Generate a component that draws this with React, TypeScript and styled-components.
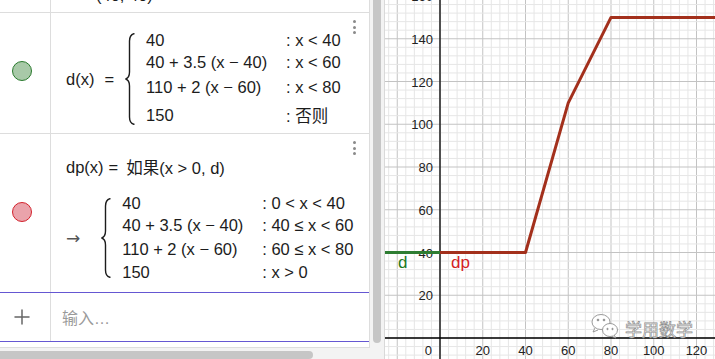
import React from 'react';
import styled, { createGlobalStyle } from 'styled-components';
import { Plus } from 'lucide-react';

const MATH_FONT = `"Liberation Sans", "Noto Sans CJK SC", sans-serif`;

const GlobalStyle = createGlobalStyle`
  html, body { margin: 0; padding: 0; background: #fff; overflow: hidden; }
  body { font-family: ${MATH_FONT}; }
`;

const Screen = styled.div`
  display: flex;
  width: 715px;
  height: 359px;
  overflow: hidden;
`;

// ---- algebra view ----

const AlgebraView = styled.div`
  display: grid;
  grid-template-columns: 370px 14px;
  grid-template-rows: 348px 11px;
  width: 385px;
  box-sizing: border-box;
  flex-shrink: 0;
  background: #f3f3f3;
  border-right: 1px solid #d9d9d9;
`;

const List = styled.div`
  display: flex;
  flex-direction: column;
  background: #fff;
  border-right: 1px solid #dddddd;
  border-bottom: 1px solid #dddddd;
  box-sizing: border-box;
  overflow: hidden;
`;

const VTrack = styled.div`
  padding: 0 3px;
`;

const VThumb = styled.div`
  width: 8px;
  height: 343px;
  background: #c6c6c6;
  border-radius: 0 0 4px 4px;
`;

const HTrack = styled.div`
  grid-column: 1 / span 2;
  padding-top: 3px;
`;

const HThumb = styled.div`
  width: 313px;
  height: 8px;
  background: #c6c6c6;
  border-radius: 0 4px 4px 0;
`;

const Row = styled.div<{ $height: number; $accent?: boolean; $noBorder?: boolean }>`
  display: grid;
  grid-template-columns: 51px 1fr;
  height: ${p => p.$height}px;
  flex-shrink: 0;
  border-top: ${p => (p.$accent ? '1px solid #6557d2' : 'none')};
  border-bottom: ${p => (p.$accent ? '1px solid #6557d2' : p.$noBorder ? 'none' : '1px solid #dddddd')};
`;

const Marker = styled.div<{ $pb?: number }>`
  display: flex;
  align-items: center;
  padding-left: 12px;
  padding-bottom: ${p => p.$pb ?? 0}px;
  border-right: 1px solid #dddddd;
  color: #666;
`;

const PlusMarker = styled(Marker)`
  padding-left: 10px;
`;

const Dot = styled.div<{ $fill: string; $stroke: string }>`
  width: 20px;
  height: 20px;
  box-sizing: border-box;
  border-radius: 50%;
  background: ${p => p.$fill};
  border: 1.5px solid ${p => p.$stroke};
`;

const Content = styled.div<{ $pt: number; $pl: number }>`
  position: relative;
  padding: ${p => p.$pt}px 0 0 ${p => p.$pl}px;
  font-family: ${MATH_FONT};
  font-size: 16.5px;
  color: #1c1c1c;
  white-space: pre;
`;

const StubText = styled.div`
  margin-top: -14px;
  padding-left: 45px;
`;

const MenuDots = styled.div`
  position: absolute;
  top: 7px;
  right: 13px;
  display: flex;
  flex-direction: column;
  gap: 2.5px;
`;

const MenuDot = styled.span`
  width: 3px;
  height: 3px;
  border-radius: 50%;
  background: #8a8a8a;
`;

const Formula = styled.div<{ $mt?: number }>`
  display: flex;
  align-items: center;
  margin-top: ${p => p.$mt ?? 0}px;
`;

const Eq = styled.span<{ $l: number; $r: number }>`
  margin: 0 ${p => p.$r}px 0 ${p => p.$l}px;
`;

const Arrow = styled.span`
  font-family: "DejaVu Sans", sans-serif;
  font-size: 17px;
  color: #555;
  margin-right: 21px;
`;

const CaseGrid = styled.div<{ $rows: string }>`
  display: grid;
  grid-template-columns: 140px auto;
  grid-template-rows: ${p => p.$rows};
  align-items: center;
  margin-left: 11px;
`;

const Placeholder = styled.div`
  display: flex;
  align-items: center;
  padding-left: 11px;
  font-size: 16px;
  color: #9a9a9a;
`;

const Brace = ({ height }: { height: number }) => {
  const m = height / 2;
  return (
    <svg width="10" height={height} viewBox={`0 0 10 ${height}`} style={{ flexShrink: 0 }}>
      <path
        d={`M9.5,0.5 Q4.5,1.5 4.5,8 L4.5,${m - 7} Q4.5,${m - 1} 0.5,${m} Q4.5,${m + 1} 4.5,${m + 7} L4.5,${height - 8} Q4.5,${height - 1.5} 9.5,${height - 0.5}`}
        fill="none"
        stroke="#1c1c1c"
        strokeWidth="1.4"
      />
    </svg>
  );
};

const Menu = () => (
  <MenuDots>
    <MenuDot />
    <MenuDot />
    <MenuDot />
  </MenuDots>
);

const dCases: [string, string][] = [
  ['40', ': x < 40'],
  ['40 + 3.5 (x − 40)', ': x < 60'],
  ['110 + 2 (x − 60)', ': x < 80'],
  ['150', ': 否则'],
];

const dpCases: [string, string][] = [
  ['40', ': 0 < x < 40'],
  ['40 + 3.5 (x − 40)', ': 40 ≤ x < 60'],
  ['110 + 2 (x − 60)', ': 60 ≤ x < 80'],
  ['150', ': x > 0'],
];

const Cases = ({ items, rows }: { items: [string, string][]; rows: string }) => (
  <CaseGrid $rows={rows}>
    {items.map(([v, c]) => (
      <React.Fragment key={c}>
        <span>{v}</span>
        <span>{c}</span>
      </React.Fragment>
    ))}
  </CaseGrid>
);

// ---- graphics view ----

const GraphView = styled.div`
  flex: 1;
  height: 359px;
  background: #fff;
  overflow: hidden;
`;

const S = 2.1375;
const X0 = 55;
const Y0 = 338;
const GW = 330;
const GH = 359;
const px = (x: number) => X0 + x * S;
const py = (y: number) => Y0 - y * S;

const Graph = () => {
  const minor = S * 4;
  const vLines: { x: number; major: boolean }[] = [];
  for (let k = -8; k <= 40; k++) {
    const x = X0 + k * minor;
    if (x >= 0 && x <= GW) vLines.push({ x, major: k % 5 === 0 });
  }
  const hLines: { y: number; major: boolean }[] = [];
  for (let k = -4; k <= 45; k++) {
    const y = Y0 - k * minor;
    if (y >= 0 && y <= GH) hLines.push({ y, major: k % 5 === 0 });
  }
  const dp = [
    [0, 40],
    [40, 40],
    [60, 110],
    [80, 150],
    [200, 150],
  ]
    .map(([x, y]) => `${px(x)},${py(y)}`)
    .join(' ');

  return (
    <svg width={GW} height={GH} style={{ display: 'block' }} fontFamily={MATH_FONT}>
      {[false, true].map(isMajor =>
        vLines
          .filter(l => l.major === isMajor)
          .map(l => (
            <line key={`v${isMajor}${l.x}`} x1={l.x} x2={l.x} y1={0} y2={GH} stroke={isMajor ? '#c3c3c3' : '#e6e6e6'} strokeWidth="1" />
          ))
      )}
      {[false, true].map(isMajor =>
        hLines
          .filter(l => l.major === isMajor)
          .map(l => (
            <line key={`h${isMajor}${l.y}`} x1={0} x2={GW} y1={l.y} y2={l.y} stroke={isMajor ? '#c3c3c3' : '#e6e6e6'} strokeWidth="1" />
          ))
      )}
      <line x1={X0} x2={X0} y1={0} y2={GH} stroke="#000" strokeWidth="1.3" />
      <line x1={0} x2={GW} y1={Y0} y2={Y0} stroke="#000" strokeWidth="1.3" />

      <g fontSize="13" fill="#222">
        {[20, 40, 60, 80, 100, 120, 140, 160].map(v => (
          <text key={`y${v}`} x={X0 - 7} y={py(v) + 5} textAnchor="end">
            {v}
          </text>
        ))}
        {[20, 40, 60, 80, 100, 120].map(v => (
          <text key={`x${v}`} x={px(v)} y={355} textAnchor="middle">
            {v}
          </text>
        ))}
        <text x={X0 - 8} y={355} textAnchor="end">
          0
        </text>
      </g>

      <line x1={0} x2={X0} y1={py(40)} y2={py(40)} stroke="#2e7d32" strokeWidth="3" />
      <polyline points={dp} fill="none" stroke="#a3301c" strokeWidth="3" strokeLinejoin="round" />
      <text x={13} y={268} fontSize="17" fill="#1f7a1f">
        d
      </text>
      <text x={66} y={268} fontSize="17" fill="#d41f1f">
        dp
      </text>

      <g fill="#fff" stroke="#8e8e8e" strokeWidth="0.9">
        <ellipse cx={216} cy={322} rx={9} ry={7.5} />
        <path d="M210,328 l-2,4 l5,-2" />
        <ellipse cx={225} cy={330} rx={7.5} ry={6.5} />
        <path d="M229,335 l2,3 l-4,-1.5" />
        <circle cx={213} cy={320} r={0.9} fill="#8e8e8e" />
        <circle cx={219} cy={320} r={0.9} fill="#8e8e8e" />
        <circle cx={222.5} cy={329} r={0.7} fill="#8e8e8e" />
        <circle cx={227.5} cy={329} r={0.7} fill="#8e8e8e" />
        <text x={240} y={336} fontSize="17" fontFamily={`"Noto Sans CJK SC", sans-serif`} strokeWidth="0.7">
          学用数学
        </text>
      </g>
    </svg>
  );
};

export default function App() {
  return (
    <>
      <GlobalStyle />
      <Screen>
        <AlgebraView>
          <List>
            <Row $height={12}>
              <Marker />
              <Content $pt={0} $pl={0}>
                <StubText>(40, 40)</StubText>
              </Content>
            </Row>
            <Row $height={120}>
              <Marker $pb={4}>
                <Dot $fill="#a8c9a8" $stroke="#2a7a2e" />
              </Marker>
              <Content $pt={16} $pl={15}>
                <Formula>
                  <span>d(x)</span>
                  <Eq $l={10} $r={11}>=</Eq>
                  <Brace height={92} />
                  <Cases items={dCases} rows="22px 23px 27px 28px" />
                </Formula>
                <Menu />
              </Content>
            </Row>
            <Row $height={158} $noBorder>
              <Marker $pb={2}>
                <Dot $fill="#eaa3ab" $stroke="#d3222c" />
              </Marker>
              <Content $pt={21} $pl={15}>
                <Formula>
                  <span>dp(x)</span>
                  <Eq $l={5} $r={8}>=</Eq>
                  <span>如果(x &gt; 0, d)</span>
                </Formula>
                <Formula $mt={14}>
                  <Arrow>→</Arrow>
                  <Brace height={80} />
                  <Cases items={dpCases} rows="21px 23px 24px 22px" />
                </Formula>
                <Menu />
              </Content>
            </Row>
            <Row $height={48} $accent>
              <PlusMarker>
                <Plus size={24} strokeWidth={1.5} color="#666" />
              </PlusMarker>
              <Placeholder>输入…</Placeholder>
            </Row>
          </List>
          <VTrack>
            <VThumb />
          </VTrack>
          <HTrack>
            <HThumb />
          </HTrack>
        </AlgebraView>
        <GraphView>
          <Graph />
        </GraphView>
      </Screen>
    </>
  );
}
